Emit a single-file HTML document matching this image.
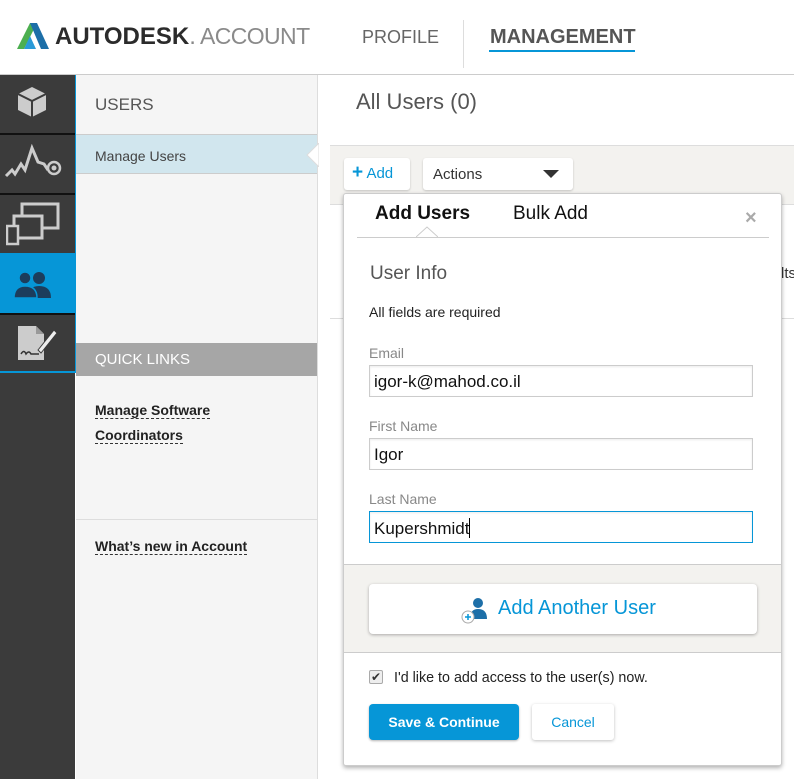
<!DOCTYPE html>
<html><head><meta charset="utf-8"><style>
*{box-sizing:border-box;margin:0;padding:0}
body{width:794px;height:779px;overflow:hidden;position:relative;background:#fff;font-family:"Liberation Sans",Arial,sans-serif}
.a{position:absolute}
.dash{border-bottom:1px dashed #333;font-weight:bold;font-size:14px;color:#222}
.inp{position:absolute;left:369px;width:384px;height:32px;border:1px solid #ccc;background:#fff;font-size:17px;color:#111;padding:6px 0 0 4px;box-shadow:inset 0 1px 2px rgba(0,0,0,.08)}
.lbl{position:absolute;left:369px;font-size:14px;color:#888}
</style></head><body>
<svg class="a" style="left:17px;top:22px" width="32" height="29" viewBox="0 0 32 29">
<polygon points="0,27 13,1 20,1 7,27" fill="#4caf50"/>
<polygon points="13,1 20,1 32,27 24,27" fill="#1d6fa8"/>
<polygon points="7,27 13,14 19,27" fill="#2a9ad8"/>
</svg>
<div class="a" style="left:55px;top:23px;font-size:24px;font-weight:bold;color:#2b2b2b">AUTODESK<span style="font-weight:normal;color:#888">.</span></div>
<div class="a" style="left:200px;top:23px;font-size:23px;color:#8a8a8a;letter-spacing:-0.6px">ACCOUNT</div>
<div class="a" style="left:362px;top:27px;font-size:18px;color:#666">PROFILE</div>
<div class="a" style="left:463px;top:20px;width:1px;height:48px;background:#ddd"></div>
<div class="a" style="left:490px;top:26px;font-size:20px;font-weight:bold;color:#555">MANAGEMENT</div>
<div class="a" style="left:489px;top:50px;width:146px;height:2px;background:#0696d7"></div>
<div class="a" style="left:0;top:74px;width:794px;height:1px;background:#ccc"></div>
<div class="a" style="left:0;top:75px;width:75px;height:704px;background:#3b3b3b"></div>
<div class="a" style="left:75px;top:75px;width:1px;height:298px;background:#0696d7"></div>
<div class="a" style="left:0;top:133px;width:75px;height:2px;background:#111"></div>
<div class="a" style="left:0;top:193px;width:75px;height:2px;background:#111"></div>
<div class="a" style="left:0;top:253px;width:76px;height:60px;background:#0696d7"></div>
<div class="a" style="left:0;top:313px;width:75px;height:2px;background:#111"></div>
<div class="a" style="left:0;top:371px;width:76px;height:2px;background:#0696d7"></div>
<svg class="a" style="left:17px;top:86px" width="30" height="32" viewBox="0 0 30 32"><polygon points="15,1 29,8 29,24 15,31 1,24 1,8" fill="#ccc"/><path d="M1,8 L15,15 L29,8 M15,15 V31" stroke="#3b3b3b" stroke-width="2" fill="none"/></svg>
<svg class="a" style="left:4px;top:144px" width="58" height="42" viewBox="0 0 58 42"><path d="M2,32 L8,26 L11,30 L17,20 L21,26 L28,4 L34,18 L40,20 L44,26" stroke="#ccc" stroke-width="3" fill="none"/><circle cx="50" cy="24" r="6" stroke="#ccc" stroke-width="2.5" fill="none"/><circle cx="50" cy="24" r="2.5" fill="#ccc"/></svg>
<svg class="a" style="left:6px;top:202px" width="54" height="44" viewBox="0 0 54 44"><rect x="16" y="2" width="36" height="24" stroke="#ccc" stroke-width="3" fill="none"/><rect x="8" y="14" width="28" height="22" fill="#3b3b3b" stroke="#ccc" stroke-width="3"/><rect x="1" y="24" width="11" height="18" fill="#3b3b3b" stroke="#ccc" stroke-width="2.5"/></svg>
<svg class="a" style="left:13px;top:270px" width="40" height="28" viewBox="0 0 40 28"><circle cx="26" cy="8" r="6" fill="#1c3d5c"/><path d="M15,28 Q15,16 26,16 Q38,16 38,28Z" fill="#1c3d5c"/><circle cx="12" cy="8" r="6" fill="#1c3d5c" stroke="#0696d7" stroke-width="1.5"/><path d="M1,28 Q1,16 12,16 Q24,16 24,28Z" fill="#1c3d5c" stroke="#0696d7" stroke-width="1.5"/></svg>
<svg class="a" style="left:16px;top:324px" width="42" height="38" viewBox="0 0 42 38"><path d="M2,2 H20 L28,10 V36 H2Z" fill="#ccc"/><path d="M20,2 V10 H28" fill="#999"/><path d="M22,26 L38,6 L41,9 L25,29Z" fill="#eee" stroke="#3b3b3b" stroke-width="1"/><path d="M5,30 q3,-5 5,0 q3,-4 5,0 h8" stroke="#333" stroke-width="1.5" fill="none"/></svg>
<div class="a" style="left:76px;top:75px;width:242px;height:704px;background:#f5f5f5;border-right:1px solid #ddd"></div>
<div class="a" style="left:95px;top:95px;font-size:17px;color:#555">USERS</div>
<div class="a" style="left:76px;top:134px;width:241px;height:40px;background:#d1e6ee;border-top:1px solid #ccc;border-bottom:1px solid #ccc"></div>
<div class="a" style="left:95px;top:148px;font-size:14px;color:#444">Manage Users</div>
<svg class="a" style="left:306px;top:143px" width="13" height="24"><polygon points="13,0 1,12 13,24" fill="#fff" stroke="#ddd"/></svg>
<div class="a" style="left:76px;top:343px;width:241px;height:33px;background:#a6a6a6"></div>
<div class="a" style="left:95px;top:351px;font-size:15px;color:#fff">QUICK LINKS</div>
<div class="a" style="left:95px;top:398px;line-height:25px"><span class="dash">Manage Software</span><br><span class="dash">Coordinators</span></div>
<div class="a" style="left:76px;top:519px;width:241px;height:1px;background:#ddd"></div>
<div class="a" style="left:95px;top:538px"><span class="dash">What’s new in Account</span></div>
<div class="a" style="left:356px;top:89px;font-size:22px;color:#555">All Users (0)</div>
<div class="a" style="left:330px;top:145px;width:464px;height:60px;background:#f3f2ef;border-top:1px solid #ddd;border-bottom:1px solid #ddd"></div>
<div class="a" style="left:344px;top:158px;width:66px;height:32px;background:#fff;border-radius:3px;box-shadow:0 1px 2px rgba(0,0,0,.2);font-size:15px;color:#0696d7;padding:7px 0 0 8px"><b style="font-size:19px;line-height:14px">+</b> Add</div>
<div class="a" style="left:423px;top:158px;width:150px;height:32px;background:#fff;border-radius:3px;box-shadow:0 1px 2px rgba(0,0,0,.2);font-size:15px;color:#333;padding:8px 0 0 10px">Actions</div>
<svg class="a" style="left:543px;top:170px" width="16" height="9"><polygon points="0,0 16,0 8,8" fill="#333"/></svg>
<div class="a" style="left:330px;top:318px;width:464px;height:1px;background:#ddd"></div>
<div class="a" style="left:781px;top:265px;font-size:15px;color:#333">lts</div>
<div class="a" style="left:343px;top:193px;width:439px;height:573px;background:#fff;border:1px solid #ccc;border-radius:3px;box-shadow:0 2px 4px rgba(0,0,0,.3)"></div>
<div class="a" style="left:375px;top:203px;font-size:19px;font-weight:bold;color:#111">Add Users</div>
<div class="a" style="left:513px;top:203px;font-size:19px;color:#111">Bulk Add</div>
<div class="a" style="left:745px;top:207px;font-size:20px;color:#aaa;font-weight:bold">×</div>
<div class="a" style="left:357px;top:237px;width:412px;height:1px;background:#ccc"></div>
<svg class="a" style="left:416px;top:226px" width="22" height="12"><polyline points="0,11 11,1 22,11" fill="#fff" stroke="#ccc"/></svg>
<div class="a" style="left:370px;top:263px;font-size:19px;color:#555">User Info</div>
<div class="a" style="left:369px;top:304px;font-size:14px;color:#222">All fields are required</div>
<div class="lbl" style="top:345px">Email</div>
<div class="inp" style="top:365px">igor-k@mahod.co.il</div>
<div class="lbl" style="top:418px">First Name</div>
<div class="inp" style="top:438px">Igor</div>
<div class="lbl" style="top:491px">Last Name</div>
<div class="inp" style="top:511px;border-color:#0696d7">Kupershmidt<span style="display:inline-block;width:1px;height:20px;background:#000;vertical-align:-4px"></span></div>
<div class="a" style="left:344px;top:564px;width:437px;height:89px;background:#f3f2ef;border-top:1px solid #ccc;border-bottom:1px solid #ccc"></div>
<div class="a" style="left:369px;top:584px;width:388px;height:50px;background:#fff;border-radius:4px;box-shadow:0 1px 3px rgba(0,0,0,.3)"></div>
<svg class="a" style="left:460px;top:597px" width="30" height="28" viewBox="0 0 30 28"><circle cx="18" cy="6" r="5" fill="#1d6fa8"/><path d="M10,22 Q10,12 18,12 Q27,12 27,22Z" fill="#1d6fa8"/><circle cx="8" cy="20" r="6" fill="#fff" stroke="#aaa"/><path d="M5,20 h6 M8,17 v6" stroke="#0696d7" stroke-width="1.5"/></svg>
<div class="a" style="left:498px;top:597px;font-size:20px;color:#0696d7">Add Another User</div>
<div class="a" style="left:369px;top:670px;width:14px;height:14px;border:1px solid #aaa;border-radius:2px;background:#eee;font-size:12px;line-height:12px;text-align:center;color:#333">✔</div>
<div class="a" style="left:394px;top:670px;font-size:14.3px;color:#222">I'd like to add access to the user(s) now.</div>
<div class="a" style="left:369px;top:704px;width:150px;height:36px;background:#0696d7;border-radius:4px;box-shadow:0 1px 2px rgba(0,0,0,.3);color:#fff;font-weight:bold;font-size:14px;text-align:center;line-height:36px">Save &amp; Continue</div>
<div class="a" style="left:532px;top:704px;width:82px;height:36px;background:#fff;border-radius:3px;box-shadow:0 1px 3px rgba(0,0,0,.25);color:#0696d7;font-size:14px;text-align:center;line-height:36px">Cancel</div>
</body></html>
